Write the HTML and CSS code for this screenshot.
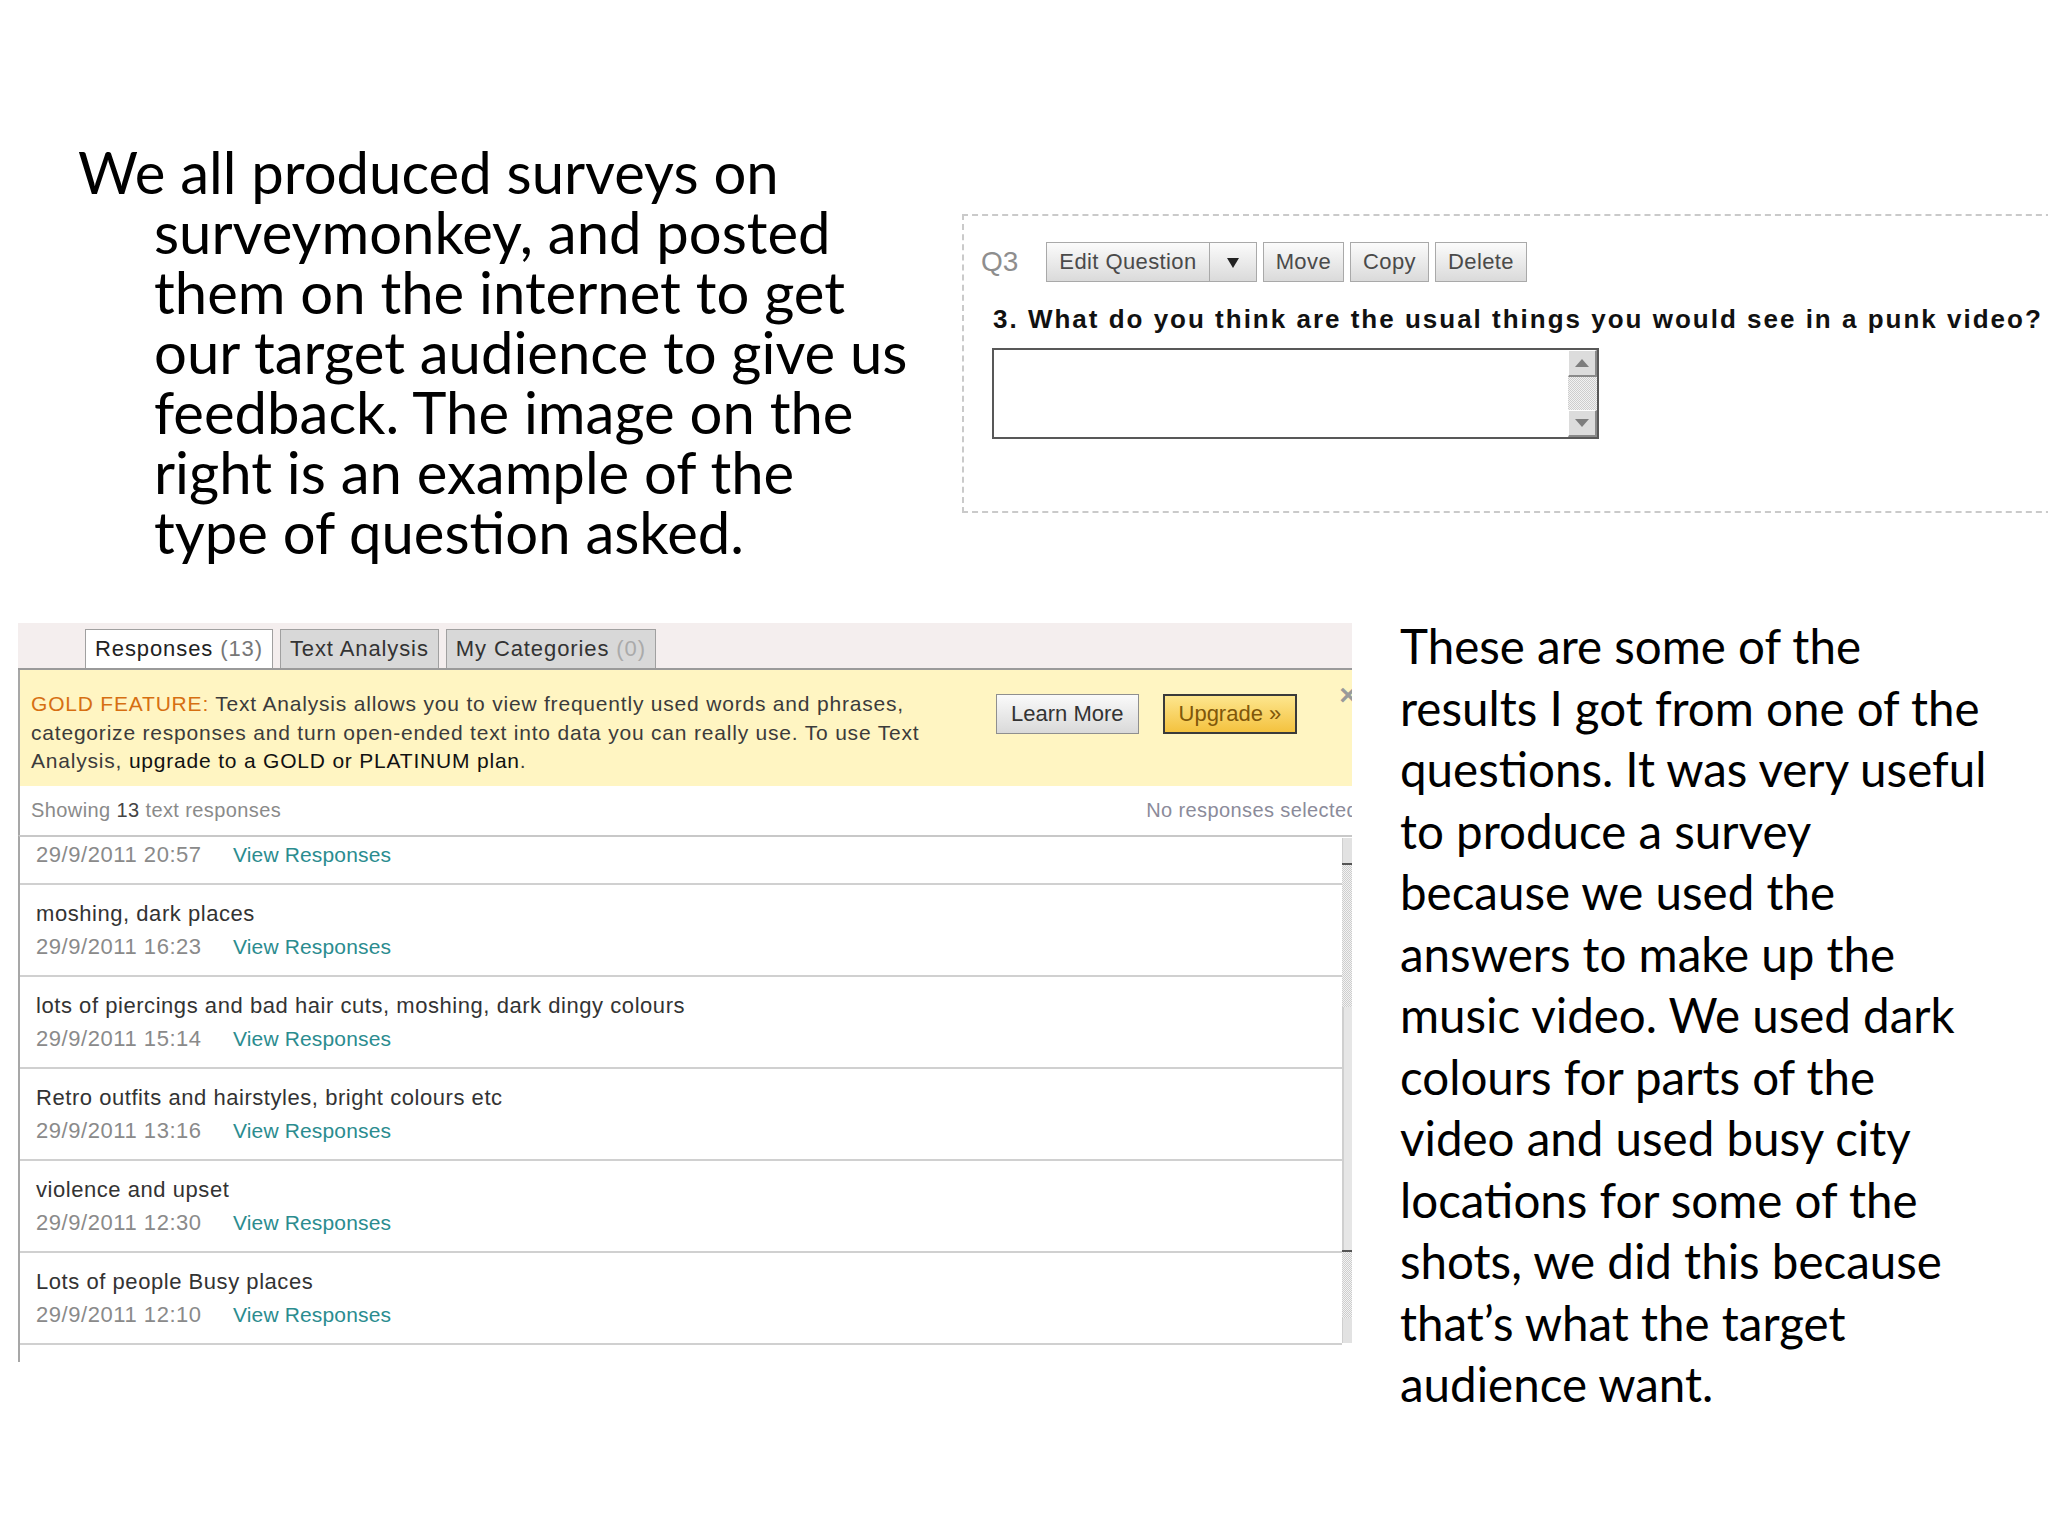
FILE: index.html
```html
<!DOCTYPE html>
<html lang="en">
<head>
<meta charset="UTF-8">
<meta name="viewport" content="width=device-width, initial-scale=1.0">
<title>Audience Feedback</title>
<link rel="stylesheet" href="styles.css">
</head>

<body>
<div class="slide">
    <div class="top">
        <p class="intro">We all produced surveys on<br>surveymonkey, and posted<br>them on the internet to get<br>our target audience to give us<br>feedback. The image on the<br>right is an example of the<br>type of question asked.</p>

        <div class="question-card">
            <div class="q-head">
                <span class="q-num">Q3</span>
                <div class="split">
                    <button class="btn">Edit Question</button>
                    <button class="btn caret">
                        <svg width="14" height="12" viewBox="0 0 14 12"><polygon points="1,1 13,1 7,11" fill="#222"/></svg>
                    </button>
                </div>
                <button class="btn">Move</button>
                <button class="btn">Copy</button>
                <button class="btn">Delete</button>
            </div>
            <p class="q-text">3. What do you think are the usual things you would see in a punk video?</p>
            <div class="answer-box">
                <div class="vscroll">
                    <div class="arrow">
                        <svg width="14" height="8" viewBox="0 0 14 8"><polygon points="0,8 14,8 7,0" fill="#7d7d7d"/></svg>
                    </div>
                    <div class="track"></div>
                    <div class="arrow">
                        <svg width="14" height="8" viewBox="0 0 14 8"><polygon points="0,0 14,0 7,8" fill="#7d7d7d"/></svg>
                    </div>
                </div>
            </div>
        </div>
    </div>

    <div class="bottom">
        <div class="results">
            <div class="panel">
                <div class="tabs">
                    <div class="tab active">Responses <span class="count">(13)</span></div>
                    <div class="tab">Text Analysis</div>
                    <div class="tab">My Categories <span class="count light">(0)</span></div>
                </div>

                <div class="gold">
                    <p class="gold-text"><span class="gold-label">GOLD FEATURE:</span> Text Analysis allows you to view frequently used words and phrases, categorize responses and turn open-ended text into data you can really use. To use Text Analysis, <span class="gold-plan">upgrade to a GOLD or PLATINUM plan</span>.</p>
                    <button class="learn">Learn More</button>
                    <button class="upgrade">Upgrade &raquo;</button>
                    <span class="close">&times;</span>
                </div>

                <div class="list-head">
                    <span>Showing <b>13</b> text responses</span>
                    <span class="none">No responses selected</span>
                </div>

                <div class="list">
                    <div class="rows">
                        <div class="resp first">
                            <div><span class="date">29/9/2011 20:57</span><span class="view">View Responses</span></div>
                        </div>
                        <div class="resp">
                            <div>moshing, dark places</div>
                            <div><span class="date">29/9/2011 16:23</span><span class="view">View Responses</span></div>
                        </div>
                        <div class="resp">
                            <div>lots of piercings and bad hair cuts, moshing, dark dingy colours</div>
                            <div><span class="date">29/9/2011 15:14</span><span class="view">View Responses</span></div>
                        </div>
                        <div class="resp">
                            <div>Retro outfits and hairstyles, bright colours etc</div>
                            <div><span class="date">29/9/2011 13:16</span><span class="view">View Responses</span></div>
                        </div>
                        <div class="resp">
                            <div>violence and upset</div>
                            <div><span class="date">29/9/2011 12:30</span><span class="view">View Responses</span></div>
                        </div>
                        <div class="resp">
                            <div>Lots of people Busy places</div>
                            <div><span class="date">29/9/2011 12:10</span><span class="view">View Responses</span></div>
                        </div>
                    </div>
                    <div class="list-scroll">
                        <div class="ls-btn"></div>
                        <div class="ls-track"></div>
                        <div class="ls-thumb"></div>
                        <div class="ls-track short"></div>
                        <div class="ls-btn"></div>
                    </div>
                </div>
            </div>
        </div>

        <p class="notes">These are some of the<br>results I got from one of the<br>questions. It was very useful<br>to produce a survey<br>because we used the<br>answers to make up the<br>music video. We used dark<br>colours for parts of the<br>video and used busy city<br>locations for some of the<br>shots, we did this because<br>that’s what the target<br>audience want.</p>
    </div>
</div>
</body>
</html>
```

FILE: styles.css
```css
body {
    margin: 0;
    background: white;
}
.slide {
    width: 2048px;
    height: 1536px;
    overflow: hidden;
    background: white;
}
.top {
    display: flex;
    align-items: flex-start;
    height: 623px;
}
.intro {
    flex: 0 0 962px;
    box-sizing: border-box;
    margin: 0;
    padding: 142px 0 0 154px;
    text-indent: -76px;
    font-family: Lato, "Open Sans", sans-serif;
    font-size: 58px;
    line-height: 60px;
    color: black;
}

/* question card */
.question-card {
    flex: 0 0 1110px;
    box-sizing: border-box;
    margin-top: 214px;
    padding: 26px 0 72px 17px;
    border: 2px dashed #cacaca;
    font-family: "Liberation Sans", Arial, sans-serif;
}
.q-head {
    display: flex;
    align-items: center;
    gap: 6px;
    height: 40px;
}
.q-num {
    font-size: 28px;
    color: #8e8e8e;
    margin-right: 22px;
}
.split {
    display: flex;
}
.btn {
    height: 40px;
    padding: 0 12px;
    border: 1px solid #a9a9a9;
    background: linear-gradient(#fbfbfb, #dadada);
    font-family: "Liberation Sans", Arial, sans-serif;
    font-size: 22px;
    letter-spacing: 0.4px;
    color: #4a4a4a;
}
.btn.caret {
    border-left: none;
    width: 47px;
    padding: 0;
}
.q-text {
    margin: 21px 0 0 12px;
    font-size: 26px;
    font-weight: bold;
    letter-spacing: 2px;
    line-height: 32px;
    color: #111;
    white-space: nowrap;
}
.answer-box {
    box-sizing: border-box;
    width: 607px;
    height: 91px;
    margin: 13px 0 0 11px;
    border: 2px solid #585858;
    background: white;
    display: flex;
    justify-content: flex-end;
}
.vscroll {
    width: 29px;
    display: flex;
    flex-direction: column;
}
.arrow {
    box-sizing: border-box;
    height: 27px;
    display: flex;
    align-items: center;
    justify-content: center;
    background: #dcdcdc;
    border-top: 1px solid white;
    border-left: 1px solid white;
    border-right: 2px solid #8a8a8a;
    border-bottom: 2px solid #8a8a8a;
}
.track {
    flex: 1;
    background: repeating-conic-gradient(#cdcdcd 0 25%, #f2f2f2 0 50%) 0 0 / 2px 2px;
}

/* results panel */
.bottom {
    display: flex;
    align-items: flex-start;
}
.results {
    flex: 0 0 1334px;
    height: 739px;
    margin-left: 18px;
    overflow: hidden;
}
.panel {
    width: 1380px;
    height: 739px;
    display: flex;
    flex-direction: column;
    font-family: "Liberation Sans", Arial, sans-serif;
}
.tabs {
    box-sizing: border-box;
    height: 47px;
    display: flex;
    align-items: flex-end;
    gap: 7px;
    padding-left: 67px;
    background: #f4eeee;
    border-bottom: 2px solid #9a9a9a;
}
.tab {
    box-sizing: border-box;
    height: 39px;
    padding: 0 9px;
    border: 1px solid #a0a0a0;
    border-bottom: none;
    background: #d8d8d8;
    font-size: 22px;
    letter-spacing: 0.9px;
    line-height: 38px;
    color: #333;
}
.tab.active {
    background: white;
    color: #222;
}
.count {
    color: #777;
}
.count.light {
    color: #aaa;
}
.gold {
    box-sizing: border-box;
    height: 116px;
    display: flex;
    align-items: flex-start;
    padding-left: 11px;
    background: #fff5c2;
    border-left: 2px solid #a7a7a7;
}
.gold-text {
    flex: 0 0 945px;
    margin: 20px 0 0;
    font-size: 21px;
    letter-spacing: 0.8px;
    line-height: 28.5px;
    color: #3b3b3b;
}
.gold-label {
    color: #d66f12;
}
.gold-plan {
    color: #111;
}
.learn, .upgrade {
    height: 40px;
    margin-top: 24px;
    padding: 0 14px;
    font-family: "Liberation Sans", Arial, sans-serif;
    font-size: 22px;
}
.learn {
    margin-left: 20px;
    border: 1px solid #8f8f8f;
    background: linear-gradient(#fafafa, #d9d9d9);
    color: #333;
}
.upgrade {
    margin-left: 24px;
    border: 2px solid #3a3a3a;
    background: linear-gradient(#fde68e, #f4c23f);
    color: #80570a;
}
.close {
    margin: 8px 0 0 42px;
    font-size: 30px;
    font-weight: bold;
    color: #9a9a9a;
}
.list-head {
    box-sizing: border-box;
    height: 49px;
    display: flex;
    justify-content: space-between;
    align-items: center;
    padding: 0 40px 0 11px;
    border-left: 2px solid #a7a7a7;
    font-size: 20px;
    letter-spacing: 0.4px;
    color: #8a8a8a;
}
.list-head b {
    font-weight: normal;
    color: #444;
}
.list-head .none {
    color: #8b8b9a;
}
.list {
    flex: 1;
    display: flex;
    border-top: 2px solid #c8c8c8;
    border-left: 2px solid #a7a7a7;
}
.rows {
    width: 1322px;
}
.resp {
    padding: 12px 0 12px 16px;
    border-bottom: 2px solid #d0d0d0;
    font-size: 22px;
    letter-spacing: 0.55px;
    line-height: 33px;
    color: #333;
}
.resp.first {
    padding-top: 1px;
}
.date {
    display: inline-block;
    width: 197px;
    color: #8a8a8a;
}
.view {
    font-size: 21px;
    letter-spacing: 0.15px;
    color: #2b8c8f;
}
.list-scroll {
    width: 18px;
    display: flex;
    flex-direction: column;
    padding-top: 1px;
}
.ls-btn {
    height: 25px;
    background: #e2e2e2;
    border-left: 1px solid #cfcfcf;
}
.ls-track {
    height: 142px;
    background: repeating-conic-gradient(#cdcdcd 0 25%, #f2f2f2 0 50%) 0 0 / 2px 2px;
    border-top: 2px solid #555;
}
.ls-track.short {
    height: 66px;
}
.ls-thumb {
    height: 243px;
    background: #e6e6e6;
    border-left: 2px solid #cfcfcf;
}
.notes {
    margin: -8px 0 0 48px;
    font-family: Lato, "Open Sans", sans-serif;
    font-size: 47.5px;
    line-height: 61.5px;
    color: black;
}
```
